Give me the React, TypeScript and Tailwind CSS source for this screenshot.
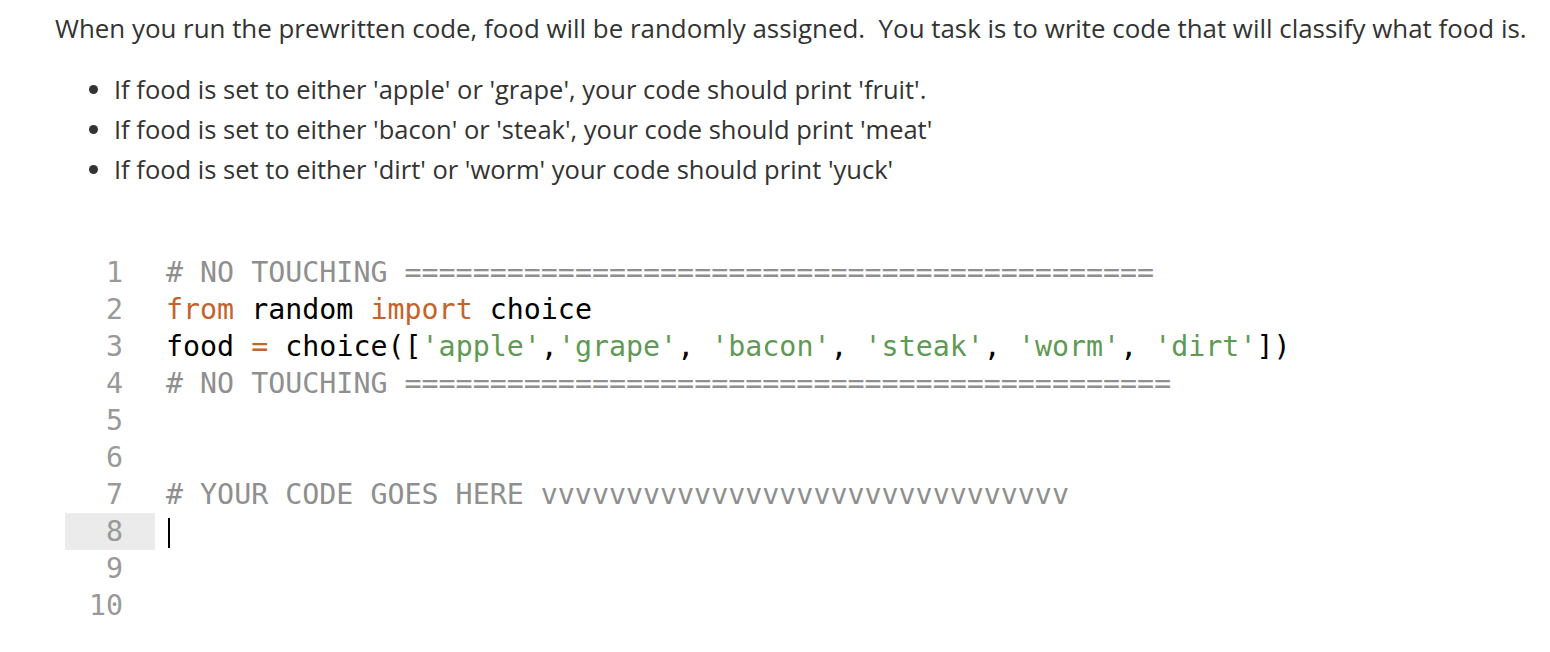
import React from "react";

const mono = { fontFamily: '"DejaVu Sans Mono", "Liberation Mono", monospace' };

const K = ({ children }: { children: React.ReactNode }) => <span className="text-[#c5632c]">{children}</span>;
const S = ({ children }: { children: React.ReactNode }) => <span className="text-[#5f9a55]">{children}</span>;
const C = ({ children }: { children: React.ReactNode }) => <span className="text-[#8f8f8f]">{children}</span>;

export default function App() {
  const lines: React.ReactNode[] = [
    <C key="1"># NO TOUCHING {"=".repeat(44)}</C>,
    <span key="2"><K>from</K> random <K>import</K> choice</span>,
    <span key="3">food <K>=</K> choice([<S>'apple'</S>,<S>'grape'</S>, <S>'bacon'</S>, <S>'steak'</S>, <S>'worm'</S>, <S>'dirt'</S>])</span>,
    <C key="4"># NO TOUCHING {"=".repeat(45)}</C>,
    <span key="5"></span>,
    <span key="6"></span>,
    <C key="7"># YOUR CODE GOES HERE {"v".repeat(31)}</C>,
    <span key="8" className="inline-block w-[2px] h-[30px] bg-black align-middle ml-[2px]"></span>,
    <span key="9"></span>,
    <span key="10"></span>,
  ];
  return (
    <div className="w-[1550px] h-[652px] bg-white overflow-hidden text-[#333333]" style={{ fontFamily: '"Open Sans", sans-serif' }}>
      <p className="pl-[55px] pt-[10px] text-[25.9px] leading-[36px] whitespace-nowrap">
        When you run the prewritten code, food will be randomly assigned.&nbsp; You task is to write code that will classify what food is.
      </p>
      <ul className="mt-[23px] pl-[114px] list-disc text-[25.5px] leading-[40px] whitespace-nowrap">
        <li>If food is set to either 'apple' or 'grape', your code should print 'fruit'.</li>
        <li>If food is set to either 'bacon' or 'steak', your code should print 'meat'</li>
        <li>If food is set to either 'dirt' or 'worm' your code should print 'yuck'</li>
      </ul>
      <div className="mt-[65px] flex text-[28.3px] leading-[37px] text-black" style={mono}>
        <div className="ml-[65px] w-[90px] flex flex-col">
          {lines.map((_, i) => (
            <div key={i} className={`h-[37px] pr-[32px] text-right text-[#999999] ${i === 7 ? "bg-[#ebebeb]" : ""}`}>{i + 1}</div>
          ))}
        </div>
        <div className="ml-[11px] flex flex-col whitespace-pre">
          {lines.map((l, i) => (
            <div key={i} className="h-[37px]">{l}</div>
          ))}
        </div>
      </div>
    </div>
  );
}
